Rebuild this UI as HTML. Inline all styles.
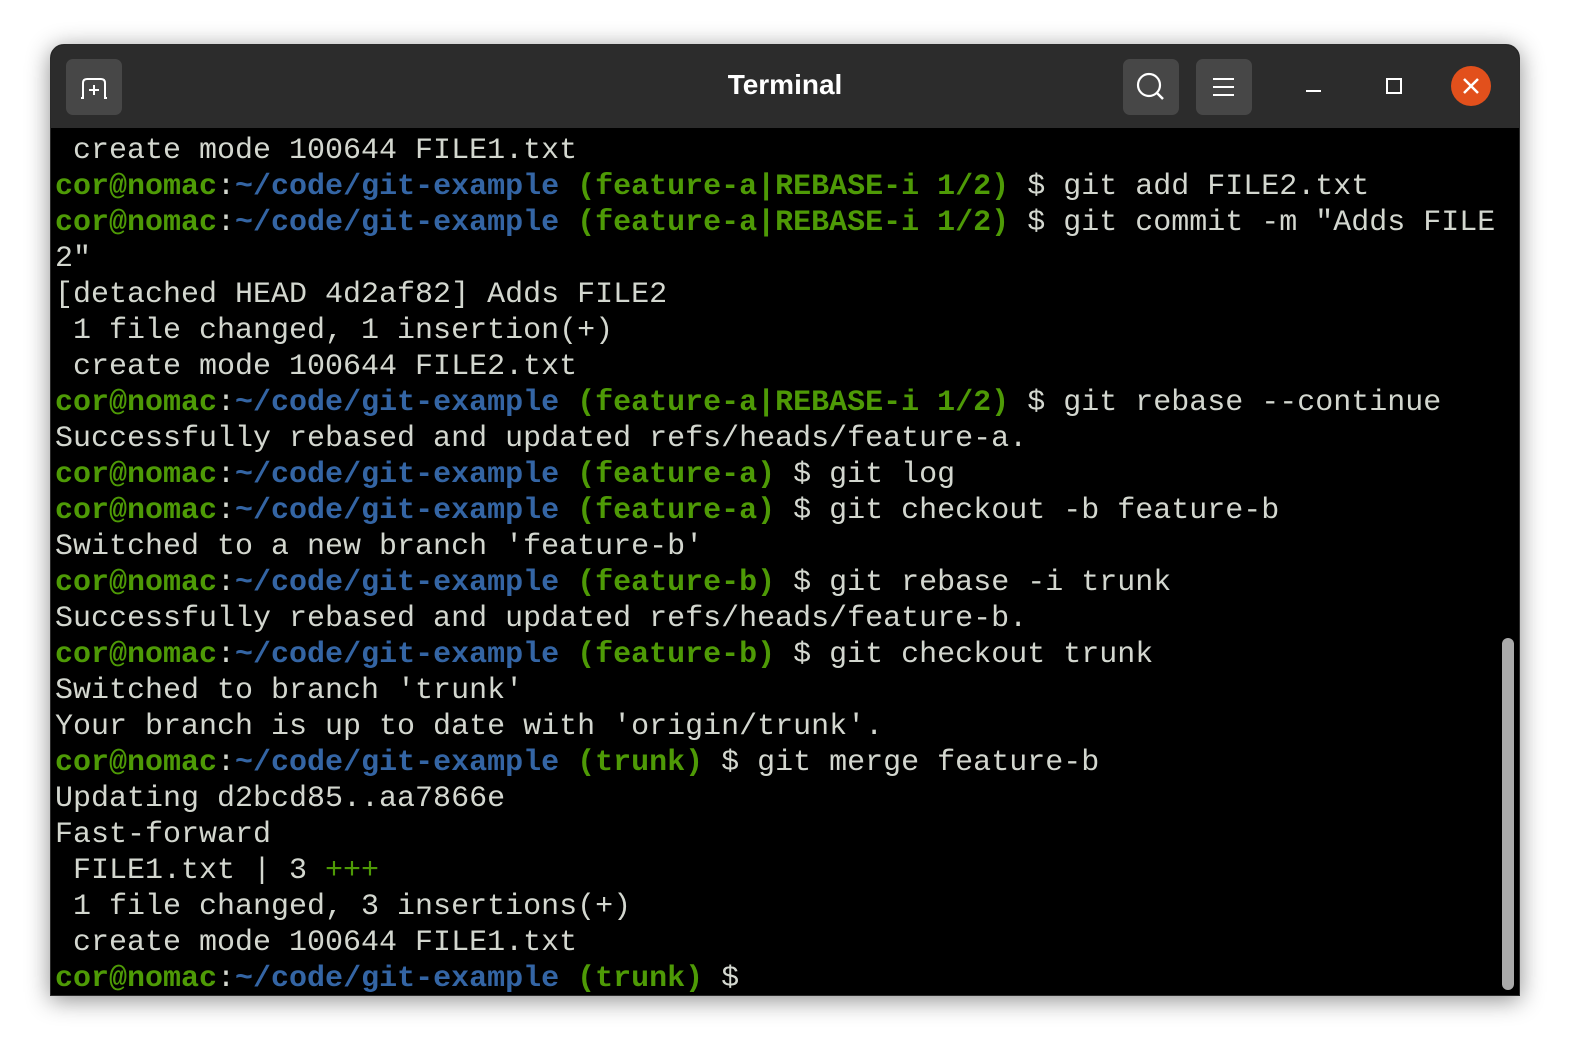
<!DOCTYPE html>
<html><head><meta charset="utf-8"><style>
html,body{margin:0;padding:0;width:1572px;height:1054px;background:#fff;overflow:hidden}
.win{position:absolute;left:50px;top:44px;width:1470px;height:952px;background:#000;border-radius:14px 14px 0 0;box-shadow:0 4px 24px rgba(0,0,0,.45);overflow:hidden;border:1px solid #2a2a2a;box-sizing:border-box}
.hdr{position:absolute;left:0;top:0;right:0;height:83px;background:#2c2c2c}
.btn{position:absolute;top:14px;width:56px;height:56px;background:#474747;border-radius:7px}
.title{position:absolute;left:0;right:0;top:24px;text-align:center;color:#fff;font:bold 28px "Liberation Sans",sans-serif}
.term{position:absolute;left:4px;top:88px;font-family:"Liberation Mono","DejaVu Sans Mono",monospace;font-size:30px;line-height:36px;color:#d3d7cf;white-space:pre}
.g{color:#4e9a06;font-weight:bold}.b{color:#3465a4;font-weight:bold}.gn{color:#4e9a06}
.sb{position:absolute;left:1451px;top:593px;width:12px;height:352px;background:#aaa;border-radius:6px}
</style></head><body>
<div class="win">
<div class="hdr">
<div class="btn" style="left:15px"><svg width="56" height="56" viewBox="0 0 56 56"><path d="M15 39h2V24q0-4 4-4h14q4 0 4 4v15h2" fill="none" stroke="#fff" stroke-width="2"/><path d="M28 26v10M23 31h10" stroke="#fff" stroke-width="2"/></svg></div>
<div class="title">Terminal</div>
<div class="btn" style="left:1072px"><svg width="56" height="56" viewBox="0 0 56 56"><circle cx="26" cy="26" r="11" fill="none" stroke="#fff" stroke-width="2.2"/><path d="M34 34l6 6" stroke="#fff" stroke-width="2.5"/></svg></div>
<div class="btn" style="left:1145px"><svg width="56" height="56" viewBox="0 0 56 56"><path d="M17 20h21M17 28h21M17 36h21" stroke="#fff" stroke-width="2"/></svg></div>
<svg style="position:absolute;left:1242px;top:30px" width="40" height="30"><path d="M13 16h15" stroke="#fff" stroke-width="2"/></svg>
<svg style="position:absolute;left:1320px;top:26px" width="40" height="30"><rect x="16" y="8" width="14" height="14" fill="none" stroke="#fff" stroke-width="2"/></svg>
<div style="position:absolute;left:1400px;top:21px;width:40px;height:40px;border-radius:50%;background:#e2501c"><svg width="40" height="40"><path d="M13 13l14 14M27 13l-14 14" stroke="#fff" stroke-width="2.5"/></svg></div>
</div>
<div class="term"> create mode 100644 FILE1.txt
<span class="g">cor@nomac</span>:<span class="b">~/code/git-example</span><span class="g"> (feature-a|REBASE-i 1/2)</span> $ git add FILE2.txt
<span class="g">cor@nomac</span>:<span class="b">~/code/git-example</span><span class="g"> (feature-a|REBASE-i 1/2)</span> $ git commit -m "Adds FILE
2"
[detached HEAD 4d2af82] Adds FILE2
 1 file changed, 1 insertion(+)
 create mode 100644 FILE2.txt
<span class="g">cor@nomac</span>:<span class="b">~/code/git-example</span><span class="g"> (feature-a|REBASE-i 1/2)</span> $ git rebase --continue
Successfully rebased and updated refs/heads/feature-a.
<span class="g">cor@nomac</span>:<span class="b">~/code/git-example</span><span class="g"> (feature-a)</span> $ git log
<span class="g">cor@nomac</span>:<span class="b">~/code/git-example</span><span class="g"> (feature-a)</span> $ git checkout -b feature-b
Switched to a new branch 'feature-b'
<span class="g">cor@nomac</span>:<span class="b">~/code/git-example</span><span class="g"> (feature-b)</span> $ git rebase -i trunk
Successfully rebased and updated refs/heads/feature-b.
<span class="g">cor@nomac</span>:<span class="b">~/code/git-example</span><span class="g"> (feature-b)</span> $ git checkout trunk
Switched to branch 'trunk'
Your branch is up to date with 'origin/trunk'.
<span class="g">cor@nomac</span>:<span class="b">~/code/git-example</span><span class="g"> (trunk)</span> $ git merge feature-b
Updating d2bcd85..aa7866e
Fast-forward
 FILE1.txt | 3 <span class="gn">+++</span>
 1 file changed, 3 insertions(+)
 create mode 100644 FILE1.txt
<span class="g">cor@nomac</span>:<span class="b">~/code/git-example</span><span class="g"> (trunk)</span> $ </div>
<div class="sb"></div>
</div>
</body></html>
